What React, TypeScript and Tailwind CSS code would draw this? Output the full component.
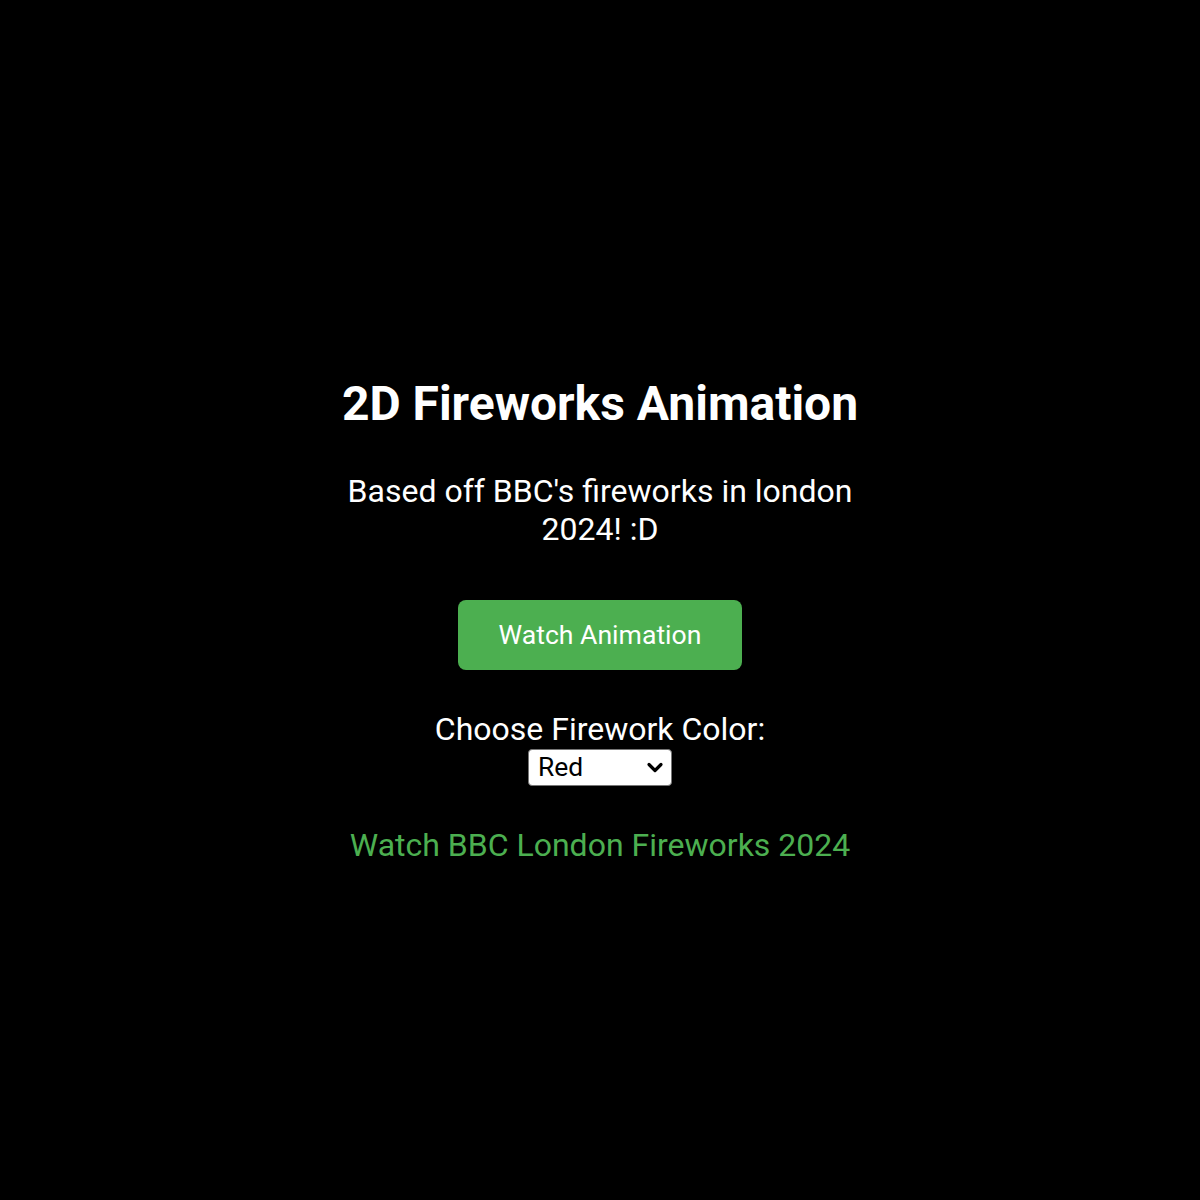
import { useState } from 'react';

const COLORS = ['Red', 'Green', 'Blue', 'Gold', 'Random'];

export default function App() {
  const [color, setColor] = useState('Red');

  return (
    <div className="min-h-screen bg-black text-white flex justify-center pt-[375px] font-['Roboto',sans-serif]">
      <div className="w-[520px] flex flex-col items-center text-center">
        <h1 className="text-[48px] font-bold leading-[1.2]">2D Fireworks Animation</h1>
        <p className="mt-[39px] text-[32px] leading-[38px]">Based off BBC's fireworks in london 2024! :D</p>
        <button className="mt-[52px] w-[284px] h-[70px] rounded-lg bg-[#4caf50] text-[26.6px] text-white">
          Watch Animation
        </button>
        <label htmlFor="color" className="mt-[40px] text-[32px] leading-[38px]">Choose Firework Color:</label>
        <div className="relative mt-px">
          <select
            id="color"
            value={color}
            onChange={(e) => setColor(e.target.value)}
            className="appearance-none w-[144px] h-[37px] bg-white text-black text-[26.4px] leading-none border border-[#767676] rounded-[4px] pl-[9px] pr-8 outline-none"
          >
            {COLORS.map((c) => (
              <option key={c} value={c}>{c}</option>
            ))}
          </select>
          {/* dropdown chevron */}
          <svg
            className="pointer-events-none absolute right-[8px] top-[12px]"
            width="18"
            height="13"
            viewBox="0 0 18 13"
            fill="none"
            stroke="black"
            strokeWidth="3.2"
            strokeLinecap="round"
            strokeLinejoin="round"
          >
            <path d="M3 3.5 L9 9.5 L15 3.5" />
          </svg>
        </div>
        <a href="#" className="mt-[40px] text-[32px] leading-[38px] text-[#4caf50]">Watch BBC London Fireworks 2024</a>
      </div>
    </div>
  );
}
